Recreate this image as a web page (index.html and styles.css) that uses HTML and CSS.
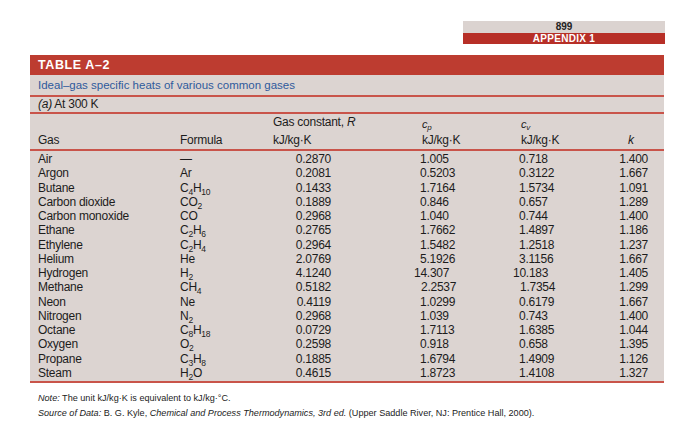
FILE: index.html
```html
<!DOCTYPE html>
<html>
<head>
<meta charset="utf-8">
<link rel="stylesheet" href="styles.css">
</head>
<body>
<div class="page">
  <div class="appendix">
    <div class="pageno">899</div>
    <div class="applabel">APPENDIX 1</div>
  </div>
  <div class="panel">
    <div class="title">TABLE A–2</div>
    <div class="subtitle">Ideal–gas specific heats of various common gases</div>
    <div class="cond"><i>(a)</i> At 300 K</div>
    <div class="grid head">
      <div class="c bottom">Gas</div>
      <div class="c bottom">Formula</div>
      <div class="c hR"><div>Gas constant, <i>R</i></div><div>kJ/kg·K</div></div>
      <div class="c hc"><div class="sym"><i>c<sub class="hs">p</sub></i></div><div>kJ/kg·K</div></div>
      <div class="c hc"><div class="sym"><i>c<sub class="hs">v</sub></i></div><div>kJ/kg·K</div></div>
      <div class="c bottom hk"><i>k</i></div>
    </div>
    <div class="grid body">
      <div>Air</div><div>—</div><div class="r">0.2870</div><div>1.005</div><div>0.718</div><div class="k">1.400</div>
      <div>Argon</div><div>Ar</div><div class="r">0.2081</div><div>0.5203</div><div>0.3122</div><div class="k">1.667</div>
      <div>Butane</div><div>C<sub>4</sub>H<sub>10</sub></div><div class="r">0.1433</div><div>1.7164</div><div>1.5734</div><div class="k">1.091</div>
      <div>Carbon dioxide</div><div>CO<sub>2</sub></div><div class="r">0.1889</div><div>0.846</div><div>0.657</div><div class="k">1.289</div>
      <div>Carbon monoxide</div><div>CO</div><div class="r">0.2968</div><div>1.040</div><div>0.744</div><div class="k">1.400</div>
      <div>Ethane</div><div>C<sub>2</sub>H<sub>6</sub></div><div class="r">0.2765</div><div>1.7662</div><div>1.4897</div><div class="k">1.186</div>
      <div>Ethylene</div><div>C<sub>2</sub>H<sub>4</sub></div><div class="r">0.2964</div><div>1.5482</div><div>1.2518</div><div class="k">1.237</div>
      <div>Helium</div><div>He</div><div class="r">2.0769</div><div>5.1926</div><div>3.1156</div><div class="k">1.667</div>
      <div>Hydrogen</div><div>H<sub>2</sub></div><div class="r">4.1240</div><div class="wide">14.307</div><div class="wide">10.183</div><div class="k">1.405</div>
      <div>Methane</div><div>CH<sub>4</sub></div><div class="r">0.5182</div><div class="nudge">2.2537</div><div class="nudge">1.7354</div><div class="k">1.299</div>
      <div>Neon</div><div>Ne</div><div class="r">0.4119</div><div>1.0299</div><div>0.6179</div><div class="k">1.667</div>
      <div>Nitrogen</div><div>N<sub>2</sub></div><div class="r">0.2968</div><div>1.039</div><div>0.743</div><div class="k">1.400</div>
      <div>Octane</div><div>C<sub>8</sub>H<sub>18</sub></div><div class="r">0.0729</div><div>1.7113</div><div>1.6385</div><div class="k">1.044</div>
      <div>Oxygen</div><div>O<sub>2</sub></div><div class="r">0.2598</div><div>0.918</div><div>0.658</div><div class="k">1.395</div>
      <div>Propane</div><div>C<sub>3</sub>H<sub>8</sub></div><div class="r">0.1885</div><div>1.6794</div><div>1.4909</div><div class="k">1.126</div>
      <div>Steam</div><div>H<sub>2</sub>O</div><div class="r">0.4615</div><div>1.8723</div><div>1.4108</div><div class="k">1.327</div>
    </div>
  </div>
  <div class="notes">
    <p><i>Note:</i> The unit kJ/kg·K is equivalent to kJ/kg·°C.</p>
    <p><i>Source of Data:</i> B. G. Kyle, <i>Chemical and Process Thermodynamics, 3rd ed.</i> (Upper Saddle River, NJ: Prentice Hall, 2000).</p>
  </div>
</div>
</body>
</html>
```

FILE: styles.css
```css
html, body {
  margin: 0;
  padding: 0;
  background: #ffffff;
}
.page {
  width: 676px;
  height: 432px;
  font-family: "Liberation Sans", Arial, sans-serif;
  color: #1c1c1c;
  padding-top: 21px;
  box-sizing: border-box;
}
.appendix {
  margin-left: 463px;
  width: 202px;
  text-align: center;
  font-weight: bold;
  font-size: 10px;
}
.pageno {
  height: 12px;
  line-height: 12px;
  background: #dbd3d0;
  color: #222;
}
.applabel {
  height: 11px;
  line-height: 11px;
  background: #b72f27;
  color: #fff;
  letter-spacing: 0.3px;
}
.panel {
  margin-top: 11px;
  margin-left: 30px;
  width: 634px;
  background: #dcd4d1;
  border-bottom: 2px solid #c9544a;
  font-size: 12px;
  letter-spacing: -0.25px;
}
.title {
  height: 20px;
  line-height: 21px;
  background: #bd3c30;
  color: #fff;
  font-weight: bold;
  font-size: 12.5px;
  letter-spacing: 0.6px;
  padding-left: 8px;
}
.subtitle {
  height: 20px;
  line-height: 21px;
  padding-left: 8px;
  color: #2f5a9c;
  font-size: 11.5px;
  letter-spacing: 0;
  border-bottom: 2px solid #c9544a;
}
.cond {
  height: 15px;
  line-height: 15px;
  padding-left: 8px;
  border-bottom: 2px solid #c9544a;
}
.grid {
  display: grid;
  grid-template-columns: 142px 93px 147px 99px 99px 30px;
  padding-left: 8px;
}
.head {
  height: 34px;
  border-bottom: 2px solid #c9544a;
  line-height: 15px;
  padding-top: 1px;
  box-sizing: content-box;
}
.c {
  display: flex;
  flex-direction: column;
  justify-content: flex-end;
  padding-bottom: 1px;
}
.hR {
  justify-content: space-between;
  white-space: nowrap;
}
.hc {
  padding-left: 2px;
}
.sym {
  line-height: 11px;
  font-size: 11px;
  margin-bottom: 3px;
}
.hs {
  font-size: 8px;
  vertical-align: -2px;
  line-height: 0;
}
.hk {
  padding-left: 10px;
}
.body {
  grid-auto-rows: 14.27px;
  line-height: 14.27px;
  padding-top: 1px;
  padding-bottom: 1px;
}
.body div {
  white-space: nowrap;
}
.body sub {
  font-size: 8.5px;
  vertical-align: -2.5px;
  line-height: 0;
}
.r {
  text-align: right;
  padding-right: 89px;
}
.k {
  text-align: right;
}
.wide {
  margin-left: -6px;
}
.nudge {
  margin-left: 1px;
}
.notes {
  margin-top: 8px;
  padding-left: 38px;
  font-size: 9.1px;
  line-height: 15px;
}
.notes p {
  margin: 0;
}
```
